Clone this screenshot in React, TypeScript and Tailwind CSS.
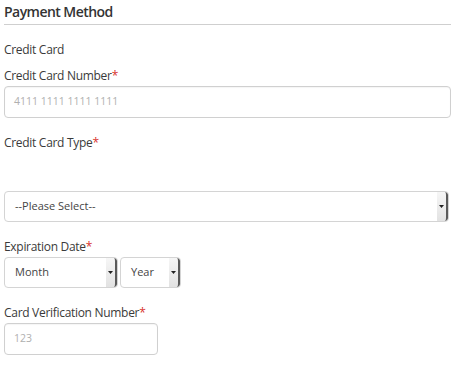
import React from 'react';

// ── Small pieces ─────────────────────────────────────────────────────────────

function Label({ text, required }: { text: string; required?: boolean }) {
  return (
    <div className="h-[18px] text-[12px] leading-[18px] tracking-[-0.3px] text-[#3a3a3a]">
      {text}
      {required && <span className="text-[#d9322e]">*</span>}
    </div>
  );
}

function TextInput({ placeholder, width }: { placeholder: string; width: string }) {
  return (
    <div
      className={`${width} flex h-[32px] items-center rounded-[4px] border border-[#d0d0d0] bg-white pl-[9px] text-[10.5px] text-[#b0b0b0] shadow-[inset_0_1px_1px_rgba(0,0,0,0.04)]`}
    >
      {placeholder}
    </div>
  );
}

function SelectBox({ value, width }: { value: string; width: string }) {
  return (
    <div
      className={`${width} flex h-[31px] items-stretch overflow-hidden rounded-[4px] border border-[#d4d4d4] bg-white text-[11px] text-[#444]`}
    >
      <div className="flex flex-1 items-center pl-[10px]">{value}</div>
      <div className="flex w-[11px] items-center justify-center rounded-r-[3px] border-r-2 border-[#5a5a5a] bg-gradient-to-b from-[#f6f6f6] to-[#e2e2e2]">
        <svg width="5" height="3" viewBox="0 0 5 3">
          <path d="M0 0 L5 0 L2.5 3 Z" fill="#222" />
        </svg>
      </div>
    </div>
  );
}

// ── App component ────────────────────────────────────────────────────────────

export default function App() {
  return (
    <div className="h-[371px] w-[474px] bg-white px-[4px] font-['Open_Sans',sans-serif]">
      <div className="w-[447px]">
        {/* Section header */}
        <div className="h-[25px] border-b border-[#cfcfcf] pt-[2px] pb-[2px] text-[14px] font-semibold leading-[20px] tracking-[-0.55px] text-[#333]">
          Payment Method
        </div>

        <div className="mt-[16px]">
          <Label text="Credit Card" />
        </div>

        <div className="mt-[8px]">
          <Label text="Credit Card Number" required />
        </div>
        <div className="mt-[1px]">
          <TextInput placeholder="4111 1111 1111 1111" width="w-[447px]" />
        </div>

        <div className="mt-[16px]">
          <Label text="Credit Card Type" required />
        </div>
        <div className="mt-[39px]">
          <SelectBox value="--Please Select--" width="w-[445px]" />
        </div>

        <div className="mt-[16px]">
          <Label text="Expiration Date" required />
        </div>
        <div className="mt-[1px] flex gap-[2px]">
          <SelectBox value="Month" width="w-[114px]" />
          <SelectBox value="Year" width="w-[61px]" />
        </div>

        <div className="mt-[16px]">
          <Label text="Card Verification Number" required />
        </div>
        <div className="mt-[1px]">
          <TextInput placeholder="123" width="w-[154px]" />
        </div>
      </div>
    </div>
  );
}
